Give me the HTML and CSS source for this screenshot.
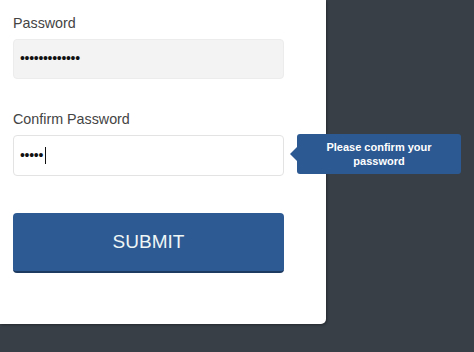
FILE: index.html
```html
<!DOCTYPE html>
<html>
<head>
<meta charset="utf-8">
<link rel="stylesheet" href="styles.css">
</head>
<body>
<div class="card">
  <form class="form">
    <label class="label">Password</label>
    <div class="field field-filled"><span class="dots">•••••••••••••</span></div>
    <label class="label label-second">Confirm Password</label>
    <div class="field-wrap">
      <div class="field"><span class="dots">•••••</span><span class="caret"></span></div>
      <div class="tooltip">Please confirm your<br>password</div>
    </div>
    <button type="button" class="submit">SUBMIT</button>
  </form>
</div>
</body>
</html>
```
FILE: styles.css
```css
html, body {
  margin: 0;
  padding: 0;
}
body {
  width: 474px;
  height: 352px;
  background: #383f47;
  font-family: "Liberation Sans", Arial, sans-serif;
  overflow: hidden;
}
.card {
  width: 326px;
  height: 324px;
  background: #ffffff;
  border-bottom-right-radius: 5px;
  box-shadow: 1px 1px 3px rgba(0, 0, 0, 0.35);
  box-sizing: border-box;
  padding: 13px 42px 0 13px;
}
.form {
  display: flex;
  flex-direction: column;
}
.label {
  display: block;
  font-size: 14.3px;
  line-height: 20px;
  color: #444444;
  margin-bottom: 6px;
}
.label-second {
  margin-top: 30px;
}
.field {
  height: 40px;
  box-sizing: border-box;
  border: 1px solid #e3e3e3;
  border-radius: 4px;
  background: #ffffff;
  display: flex;
  align-items: center;
  padding-left: 6px;
}
.field-filled {
  background: #f3f3f3;
  border-color: #ececec;
}
.dots {
  font-size: 14px;
  color: #111;
  letter-spacing: -0.3px;
  position: relative;
  top: -1px;
}
.caret {
  display: inline-block;
  width: 1px;
  height: 17px;
  background: #111;
  margin-left: 2px;
}
.field-wrap {
  position: relative;
  height: 41px;
}
.field-wrap .field {
  height: 41px;
}
.tooltip {
  position: absolute;
  left: calc(100% + 13px);
  top: -1px;
  width: 164px;
  height: 40px;
  box-sizing: border-box;
  background: #2d5992;
  border-radius: 3px;
  color: #ffffff;
  font-weight: bold;
  font-size: 11px;
  line-height: 14px;
  text-align: center;
  padding-top: 6px;
}
.tooltip::before {
  content: "";
  position: absolute;
  left: -7px;
  top: 13px;
  border-top: 7px solid transparent;
  border-bottom: 7px solid transparent;
  border-right: 7px solid #2d5992;
}
.submit {
  margin-top: 37px;
  height: 60px;
  width: 100%;
  border: none;
  border-bottom: 2px solid #1d3a60;
  border-radius: 4px;
  background: #2e5a93;
  color: #eef6f6;
  font-family: "Liberation Sans", Arial, sans-serif;
  font-size: 19px;
  padding: 0;
  cursor: pointer;
}
```
